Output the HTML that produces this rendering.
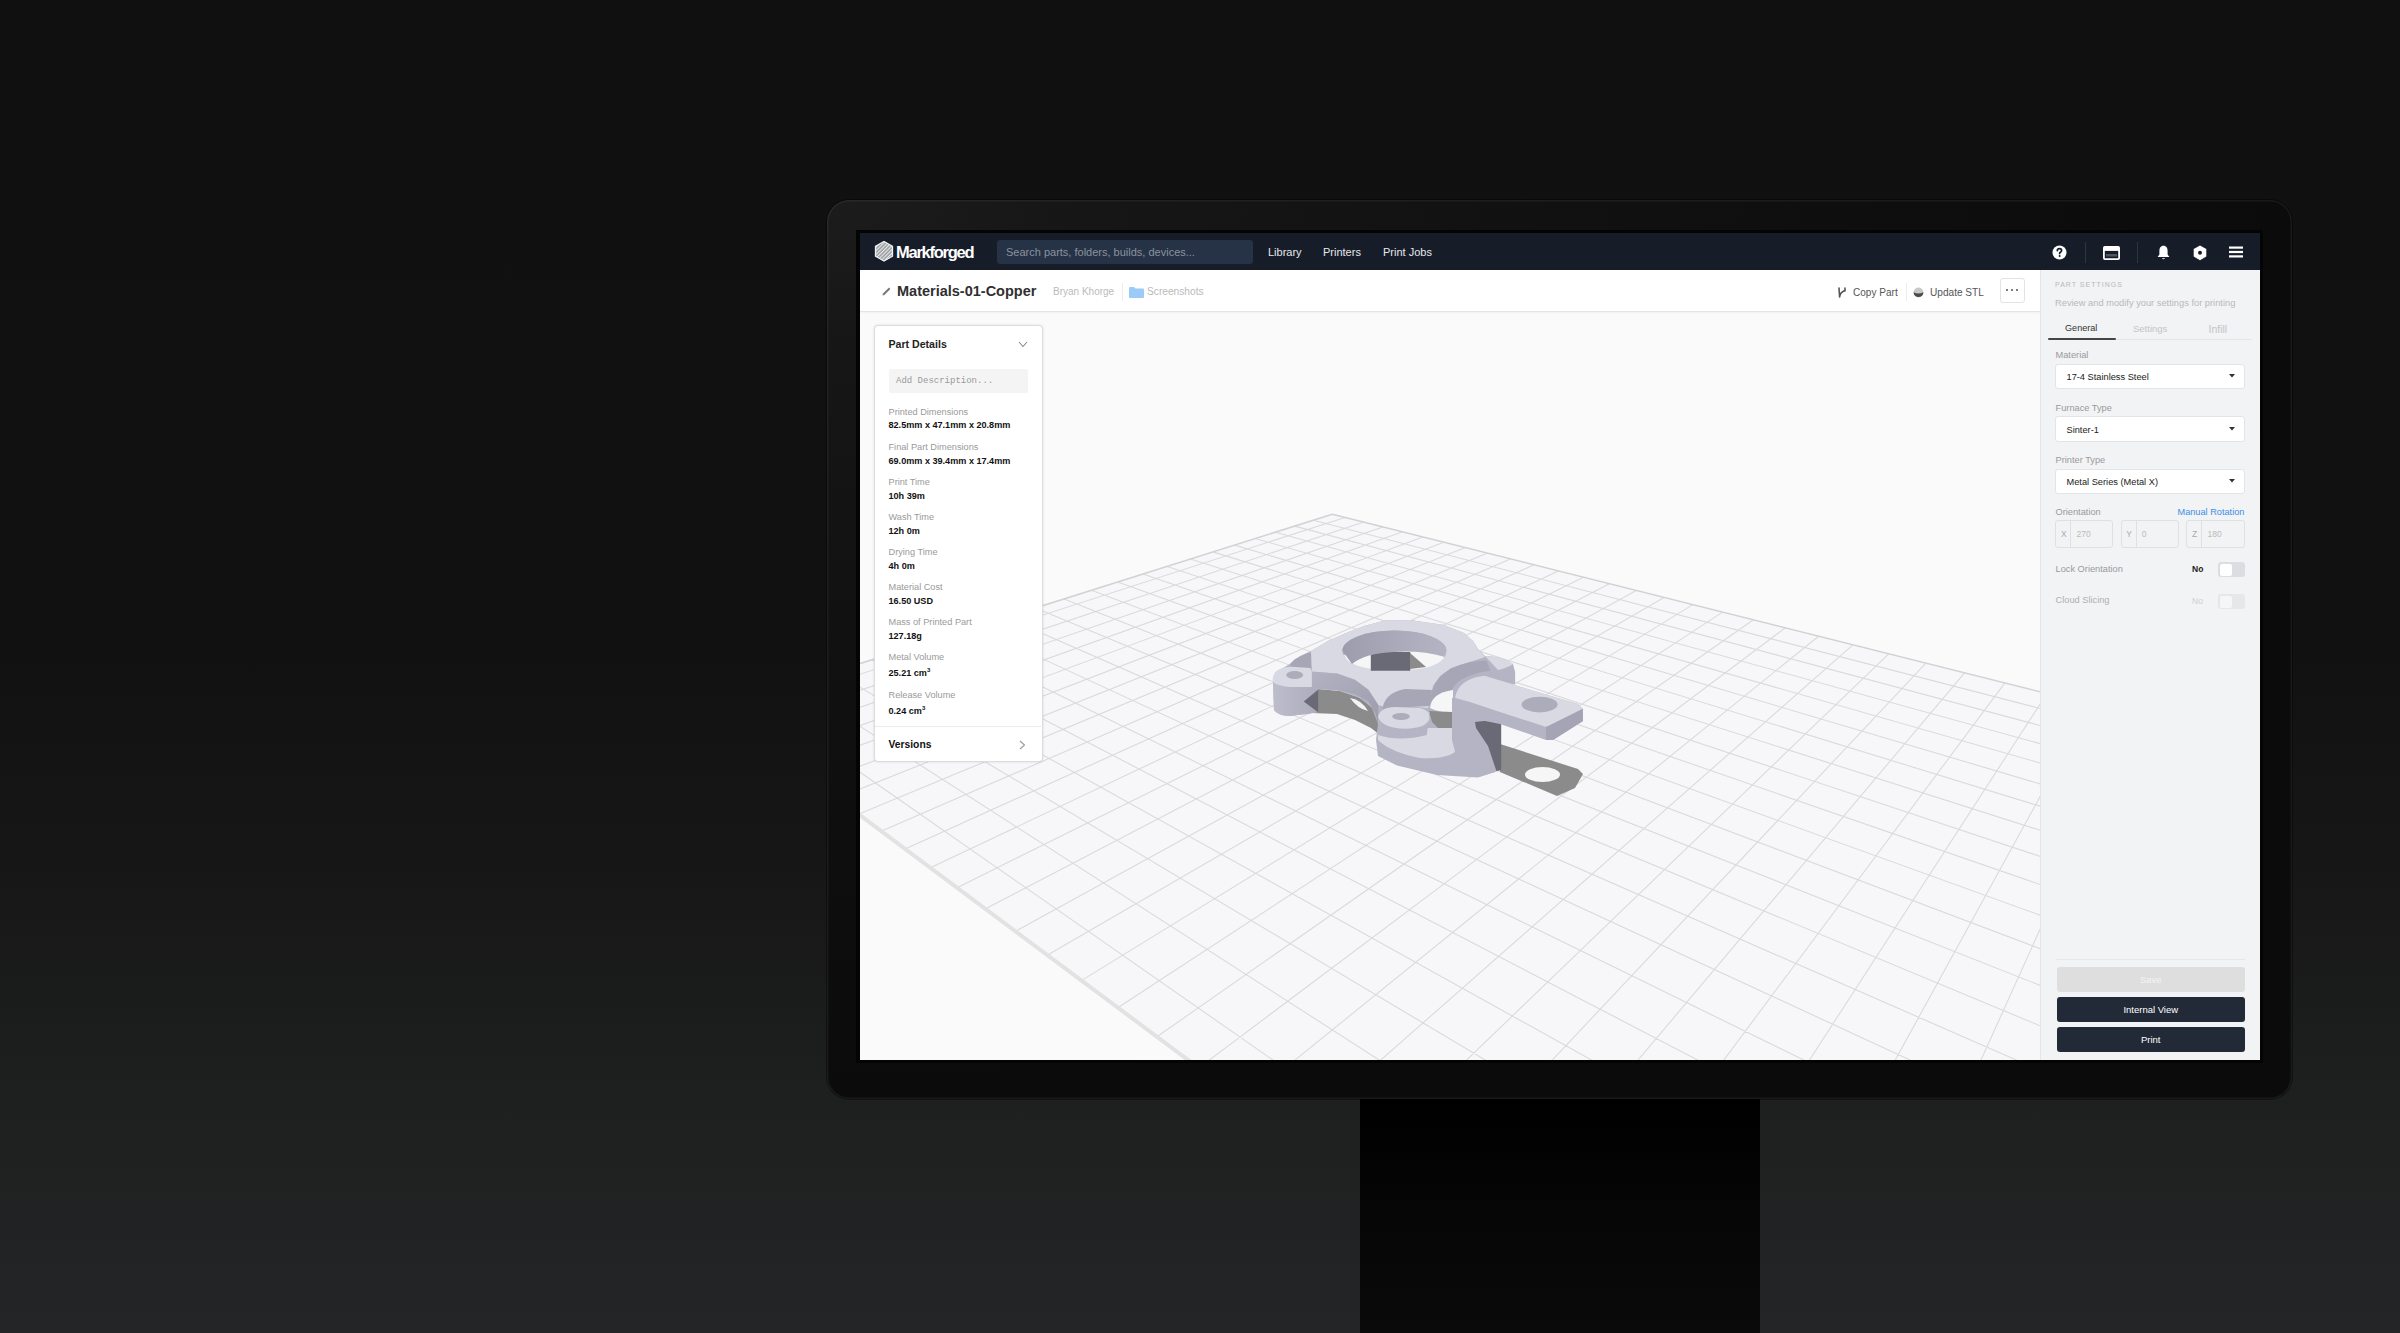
<!DOCTYPE html>
<html><head><meta charset="utf-8">
<style>
*{margin:0;padding:0;box-sizing:border-box}
html,body{width:2400px;height:1333px;overflow:hidden}
body{position:relative;font-family:"Liberation Sans",sans-serif;background:linear-gradient(to bottom,#101010 0px,#111111 640px,#161616 850px,#1e1f1f 1100px,#242526 1333px)}
.abs{position:absolute}
#bezel{left:827px;top:200px;width:1465px;height:899px;border-radius:22px;background:radial-gradient(ellipse farthest-corner at 0% 0%,#1c1c1c 0%,#161616 12%,#121212 30%,#0e0e0e 50%,#0b0b0b 72%);box-shadow:inset 0 0 0 1.5px rgba(255,255,255,0.06),0 0 0 1px rgba(0,0,0,0.4)}
#stand{left:1360px;top:1099px;width:400px;height:234px;background:linear-gradient(to bottom,#000 0%,#050505 40%,#0a0a0a 100%)}
#screen{left:859px;top:233px;width:1401px;height:827px;background:#f8f8f8;overflow:hidden;box-shadow:0 0 0 3px #040404}
#nav{left:0;top:0;width:1401px;height:37px;background:#161d29}
#hdr{left:0;top:37px;width:1181px;height:42px;background:#fff;border-bottom:1.5px solid #e4e4e4;box-shadow:0 1px 2px rgba(0,0,0,0.04)}
#rp{left:1181px;top:37px;width:220px;height:790px;background:#f2f3f5;border-left:1px solid #e4e5e7}
.t{position:absolute;white-space:nowrap;line-height:1}
.v sup{font-size:6px;vertical-align:top;position:relative;top:-2px}
</style></head><body>
<div id="bezel" class="abs"></div>
<div id="stand" class="abs"></div>
<div id="screen" class="abs">
  <div id="view" class="abs" style="left:0;top:79px;width:1181px;height:748px;background:#fafafa;overflow:hidden"><!--GRID--><svg class="abs" style="left:0;top:0" width="1181" height="748" viewBox="0 0 1181 748">
    <path d="M473.3,202.2L1640.6,495.0L1924.5,1935.8L-140.1,396.1Z" fill="#f7f7f9"/>
    <path d="M486.1,205.4L-129.2,404.3M504.8,210.1L-113.1,416.3M523.9,214.9L-96.2,428.9M543.6,219.8L-78.6,442.0M563.9,224.9L-60.1,455.8M584.8,230.2L-40.7,470.3M606.3,235.6L-20.3,485.5M628.5,241.1L1.2,501.5M651.4,246.9L23.8,518.4M675.0,252.8L47.7,536.2M699.3,258.9L72.9,555.0M724.5,265.2L99.6,574.9M750.4,271.7L127.9,596.0M777.3,278.5L157.9,618.4M805.0,285.4L189.9,642.2M833.8,292.6L224.0,667.6M863.5,300.1L260.3,694.8M894.4,307.8L299.3,723.8M926.3,315.8L341.1,755.0M959.5,324.2L386.1,788.5M993.9,332.8L434.6,824.7M1029.7,341.8L487.2,863.9M1066.9,351.1L544.2,906.5M1105.6,360.8L606.4,952.8M1145.9,370.9L674.4,1003.5M1187.9,381.5L749.0,1059.2M1231.7,392.5L831.4,1120.6M1277.5,403.9L922.8,1188.8M1325.3,415.9L1024.8,1264.8M1375.3,428.5L1139.2,1350.2M1427.7,441.6L1268.6,1446.6M1482.6,455.4L1416.1,1556.6M1540.2,469.8L1585.7,1683.1M1600.8,485.0L1782.8,1830.1M454.4,208.2L1644.9,516.7M435.7,214.1L1649.2,538.7M416.3,220.2L1653.9,562.4M396.3,226.5L1658.9,587.7M375.5,233.1L1664.2,615.1M353.9,239.9L1670.0,644.5M331.5,247.0L1676.3,676.4M308.2,254.4L1683.2,711.1M284.0,262.0L1690.6,748.9M258.8,270.0L1698.8,790.2M232.5,278.3L1707.7,835.6M205.1,287.0L1717.6,885.8M176.6,296.0L1728.6,941.5M146.7,305.4L1740.8,1003.6M115.5,315.3L1754.6,1073.4M82.8,325.6L1770.1,1152.4M48.6,336.5L1787.9,1242.5M12.7,347.8L1808.3,1346.2M-25.0,359.7L1832.1,1467.0M-64.6,372.2L1860.2,1609.2M-106.3,385.4L1893.7,1779.3" stroke="#dadadc" stroke-width="1.1" fill="none"/>
    <path d="M473.3,202.2L1640.6,495.0M473.3,202.2L-140.1,396.1" stroke="#d2d2d4" stroke-width="1.6" fill="none"/>
    <path d="M-140.1,398.1L1924.5,1937.8" stroke="#e2e2e3" stroke-width="4" fill="none"/>
  </svg><!--/GRID--><!--PART--><svg class="abs" style="left:0;top:0" width="1181" height="748" viewBox="0 0 1181 748"><defs><linearGradient id="gWall" x1="0" y1="0" x2="1" y2="0"><stop offset="0" stop-color="#9c9cac"/><stop offset="0.5" stop-color="#a9a9b9"/><stop offset="1" stop-color="#b4b4c4"/></linearGradient><linearGradient id="gSide" x1="0" y1="0" x2="1" y2="0"><stop offset="0" stop-color="#bdbdcc"/><stop offset="1" stop-color="#acacbc"/></linearGradient><linearGradient id="gBand" x1="0" y1="0" x2="1" y2="1"><stop offset="0" stop-color="#b2b2c2"/><stop offset="1" stop-color="#9c9cad"/></linearGradient><linearGradient id="gShad" x1="0" y1="0" x2="0" y2="1"><stop offset="0" stop-color="#808080"/><stop offset="1" stop-color="#959595"/></linearGradient></defs><path d="M459.0,377.0 L481.0,379.0 L499.0,385.0 L511.0,392.0 L518.0,404.0 L521.0,423.0 L512.0,416.0 L496.0,408.0 L478.0,402.0 L453.0,401.0 L459.0,388.0Z" fill="#8b8b8b"/><path d="M569.0,392.0 L592.0,388.0 L593.0,414.0 L581.0,423.0 L569.0,416.0Z" fill="#8b8b8b"/><path d="M641.0,432.0 L719.0,457.0 L724.0,462.0 L716.0,476.0 L698.0,484.0 L641.0,460.0Z" fill="#8b8b8b"/><ellipse cx="683.5" cy="462.5" rx="17.5" ry="7.5" fill="#f6f6f7"/><path d="M431.0,352.0 L441.0,344.0 L452.0,339.0 L469.0,329.0 L487.0,321.0 L505.0,314.0 L526.0,308.5 L551.0,308.0 L585.0,313.0 L605.0,321.0 L614.0,329.0 L619.0,337.0 L626.0,344.0 L632.0,345.0 L646.0,348.0 L654.0,355.0 L656.0,361.0 L656.0,372.0 L641.0,378.0 L625.0,388.0 L611.0,393.0 L601.0,400.0 L593.0,408.0 L593.0,423.0 L601.0,433.0 L617.0,438.0 L626.0,448.0 L636.0,460.0 L619.0,465.5 L578.0,463.0 L538.0,453.5 L519.0,444.0 L517.0,428.0 L519.0,412.0 L513.0,396.0 L501.0,386.0 L481.0,379.0 L459.0,377.0 L459.0,400.0 L449.0,402.0 L429.0,404.0 L415.0,398.0 L414.0,370.0 L417.0,360.0Z" fill="#b4b4c4"/><path d="M452.0,339.0 L469.0,329.0 L487.0,321.0 L505.0,314.0 L526.0,308.5 L551.0,308.0 L585.0,313.0 L605.0,321.0 L614.0,329.0 L619.0,337.0 L626.0,345.0 L611.0,350.0 L592.0,356.0 L581.0,364.0 L574.0,374.0 L571.0,388.0 L569.0,396.0 L546.0,394.0 L526.0,395.0 L519.0,393.0 L509.0,378.0 L496.0,368.0 L478.0,361.5 L453.0,359.5Z" fill="#d9d9e4"/><ellipse cx="535.4" cy="338.6" rx="52" ry="20" fill="#acacba"/><path d="M485,343 Q535,332 586,343 Q581,358.5 535,358.6 Q491,358 485,343Z" fill="#f6f6f7"/><path d="M511.8,340.0 L551.2,340.0 L551.2,358.8 L511.8,358.8Z" fill="#6a6a76"/><path d="M551.0,341.0 L567.0,355.0 L551.0,357.0Z" fill="#8b8b8b"/><path d="M483.4000000000001,338.6 A52,20 0 0 1 587.4000000000001,338.6 L586,345 Q561,338 535,340 Q506,341 493,352Z" fill="url(#gWall)"/><path d="M431.0,352.0 L436.0,347.0 L450.0,340.8 L452.0,341.7 L452.0,356.0 L433.0,356.0Z" fill="#a6a6b6"/><path d="M452.8,359.7 L478.0,361.5 L496.0,367.8 L509.5,377.7 L519.4,393.0 L519.0,412.0 L516.7,402.0 L509.5,389.4 L496.0,382.2 L478.0,377.7 L459.0,376.8 L452.8,376.0Z" fill="url(#gBand)"/><path d="M414,369.6 L415,398.4 Q421,404.5 431,404 L459,400.20000000000005 L459,377.70000000000005 L452.79999999999995,375 Z" fill="url(#gSide)"/><path d="M459.1,377.7 L459.1,400.2 L444.7,389.4Z" fill="#6a6a76"/><path d="M413.5,369.6 Q413,355 433,354.79999999999995 L451,356 L452.79999999999995,359 L452.79999999999995,375 L431,375 Q417,374 413.5,369.6Z" fill="#d9d9e4"/><ellipse cx="435.7" cy="363.0" rx="8.5" ry="4" fill="#acacba"/><path d="M523,400 Q524,381 546,377 L573,378 L571,394 L531,396Z" fill="#a6a6b6"/><path d="M571.8,394 Q569,360 611,350 L632,348 L641,358 Q601,360 592,379 L581,396Z" fill="#a6a6b6"/><path d="M571,396 Q572,381 594,378 L594,401 Q581,401 571,396Z" fill="#f6f6f7"/><path d="M491,386 Q503,388 509,399 Q499,397 491,386Z" fill="#f4f4f5"/><path d="M570.0,399.0 L593.0,400.0 L593.0,416.0 L582.0,419.0 L573.0,410.0Z" fill="#8b8b8b"/><path d="M519,423 Q541,423 566,416 L593,416 L601,433 Q596,448 561,446 Q531,440 519,428Z" fill="#d9d9e4"/><path d="M519,406 L519,423 Q541,430 567.7,423 L571,400Z" fill="#b4b4c4"/><path d="M519,405 Q521,395 536,395 L561,396 Q571,398 570.5,406 Q569,416 546,416.79999999999995 Q523,416 519,405Z" fill="#d9d9e4"/><ellipse cx="542.0" cy="404.5" rx="8.8" ry="3.4" fill="#acacba"/><path d="M593.0,386.0 L617.0,378.0 L642.0,407.0 L642.0,458.0 L636.0,460.0 L619.0,465.0 L601.0,458.0 L593.0,428.0Z" fill="#b4b4c4"/><path d="M616.0,410.0 L642.2,407.0 L642.2,458.0 L637.4,459.0 L629.0,434.0 L617.0,416.0Z" fill="#6a6a76"/><path d="M626,344 Q641,344 654,352 L656.0999999999999,360 L656.0999999999999,369 L641,372 L631,358Z" fill="#b4b4c4"/><path d="M626,344 Q641,344 654,352 Q648,356 639,358Z" fill="#d9d9e4"/><path d="M596.0,382.0 L625.0,364.0 L719.0,392.0 L724.0,397.0 L724.0,409.0 L694.0,428.0 L687.0,428.0 L641.0,412.0 L596.0,403.0Z" fill="#b4b4c4"/><path d="M596,386 Q599,367 625.4000000000001,363.79999999999995 L719,392 L723.8,396.79999999999995 L693.8,413.6 L686.5999999999999,414.79999999999995 L641,400 L611,390Z" fill="#d9d9e4"/><path d="M687.0,415.0 L723.8,396.8 L724.0,409.0 L694.0,428.0 L687.0,428.0Z" fill="#a4a4b4"/><ellipse cx="680.6" cy="392.6" rx="18" ry="7.8" fill="#acacba"/></svg><!--/PART--></div>
  <div id="lp" class="abs" style="left:15px;top:92px;width:169px;height:437px;background:#fff;border:1.5px solid #dcdcdc;border-radius:4px;box-shadow:0 0 2.5px rgba(0,0,0,0.13)">
    <div class="t" style="left:13.5px;top:12.5px;font-size:10.6px;font-weight:bold;color:#222">Part Details</div>
    <svg class="abs" style="left:143px;top:14.5px" width="10" height="7" viewBox="0 0 10 7"><path d="M1 1 L5 5.5 L9 1" stroke="#888" stroke-width="1.1" fill="none"/></svg>
    <div class="abs" style="left:13.5px;top:42.5px;width:139px;height:24.5px;background:#f4f4f4;border-radius:2px"></div>
    <div class="t" style="left:21px;top:51px;font-family:'Liberation Mono',monospace;font-size:9px;color:#999">Add Description...</div>
    <div class="t" style="left:13.5px;top:81.5px;font-size:9.2px;color:#9a9a9a">Printed Dimensions</div>
    <div class="t v" style="left:13.5px;top:95px;font-size:9.1px;font-weight:bold;color:#111">82.5mm x 47.1mm x 20.8mm</div>
    <div class="t" style="left:13.5px;top:116.5px;font-size:9.2px;color:#9a9a9a">Final Part Dimensions</div>
    <div class="t v" style="left:13.5px;top:130.5px;font-size:9.1px;font-weight:bold;color:#111">69.0mm x 39.4mm x 17.4mm</div>
    <div class="t" style="left:13.5px;top:151.5px;font-size:9.2px;color:#9a9a9a">Print Time</div>
    <div class="t v" style="left:13.5px;top:165.5px;font-size:9.1px;font-weight:bold;color:#111">10h 39m</div>
    <div class="t" style="left:13.5px;top:186.5px;font-size:9.2px;color:#9a9a9a">Wash Time</div>
    <div class="t v" style="left:13.5px;top:200.5px;font-size:9.1px;font-weight:bold;color:#111">12h 0m</div>
    <div class="t" style="left:13.5px;top:221.5px;font-size:9.2px;color:#9a9a9a">Drying Time</div>
    <div class="t v" style="left:13.5px;top:235.5px;font-size:9.1px;font-weight:bold;color:#111">4h 0m</div>
    <div class="t" style="left:13.5px;top:256.5px;font-size:9.2px;color:#9a9a9a">Material Cost</div>
    <div class="t v" style="left:13.5px;top:270.5px;font-size:9.1px;font-weight:bold;color:#111">16.50 USD</div>
    <div class="t" style="left:13.5px;top:291.5px;font-size:9.2px;color:#9a9a9a">Mass of Printed Part</div>
    <div class="t v" style="left:13.5px;top:305.5px;font-size:9.1px;font-weight:bold;color:#111">127.18g</div>
    <div class="t" style="left:13.5px;top:326.5px;font-size:9.2px;color:#9a9a9a">Metal Volume</div>
    <div class="t v" style="left:13.5px;top:343px;font-size:9.1px;font-weight:bold;color:#111">25.21 cm<sup>3</sup></div>
    <div class="t" style="left:13.5px;top:364.5px;font-size:9.2px;color:#9a9a9a">Release Volume</div>
    <div class="t v" style="left:13.5px;top:381px;font-size:9.1px;font-weight:bold;color:#111">0.24 cm<sup>3</sup></div>
    <div class="abs" style="left:0;top:399.5px;width:166px;height:1px;background:#ececec"></div>
    <div class="t" style="left:13.5px;top:413.5px;font-size:10.3px;font-weight:bold;color:#111">Versions</div>
    <svg class="abs" style="left:144px;top:413.5px" width="7" height="10" viewBox="0 0 7 10"><path d="M1 1 L5.5 5 L1 9" stroke="#999" stroke-width="1.1" fill="none"/></svg>
  </div>
  <div id="nav" class="abs">
    <svg class="abs" style="left:15px;top:8.3px" width="20" height="21" viewBox="0 0 20 21">
      <defs><pattern id="hp" width="2.6" height="2.6" patternUnits="userSpaceOnUse" patternTransform="rotate(45)"><rect width="1.5" height="2.6" fill="#e8e8e8"/><rect x="1.5" width="1.1" height="2.6" fill="#9a9ea4"/></pattern></defs>
      <polygon points="10,0.5 18.5,5.3 18.5,15.2 10,20 1.5,15.2 1.5,5.3" fill="url(#hp)" stroke="#f0f0f0" stroke-width="1.3" stroke-linejoin="round"/>
    </svg>
    <div class="t" style="left:37px;top:11px;font-size:16.5px;font-weight:bold;color:#fff;letter-spacing:-1.25px">Markforged</div>
    <div class="abs" style="left:138px;top:7px;width:256px;height:24px;border-radius:3px;background:#263246"></div>
    <div class="t" style="left:147px;top:13.5px;font-size:11px;color:#8a93a0">Search parts, folders, builds, devices...</div>
    <div class="t" style="left:409px;top:14px;font-size:11px;color:#e6e8eb">Library</div>
    <div class="t" style="left:464px;top:14px;font-size:11px;color:#e6e8eb">Printers</div>
    <div class="t" style="left:524px;top:14px;font-size:11px;color:#e6e8eb">Print Jobs</div>

    <svg class="abs" style="left:1193px;top:12px" width="15" height="15" viewBox="0 0 15 15"><circle cx="7.5" cy="7.5" r="7" fill="#fff"/><path d="M5.3 5.6 Q5.4 3.6 7.5 3.6 Q9.6 3.6 9.6 5.4 Q9.6 6.6 8.3 7.2 Q7.6 7.6 7.6 8.6" stroke="#161d29" stroke-width="1.7" fill="none" stroke-linecap="round"/><circle cx="7.6" cy="11" r="1" fill="#161d29"/></svg>
    <div class="abs" style="left:1225.5px;top:8.5px;width:1.5px;height:21px;background:#2c3542"></div>
    <svg class="abs" style="left:1243.5px;top:12.5px" width="17" height="14" viewBox="0 0 17 14"><rect x="0.9" y="0.9" width="15.2" height="12.2" rx="1" fill="none" stroke="#fff" stroke-width="1.8"/><rect x="0.9" y="0.9" width="15.2" height="4" fill="#fff"/><rect x="3" y="8" width="11" height="2.5" fill="#fff" opacity="0.25"/></svg>
    <div class="abs" style="left:1277.5px;top:8.5px;width:1.5px;height:21px;background:#2c3542"></div>
    <svg class="abs" style="left:1297.5px;top:11.5px" width="13" height="16" viewBox="0 0 13 16"><path d="M6.5 0.8 C3.6 0.8 2.4 3.3 2.4 6 L2.4 9.6 L0.6 12 L12.4 12 L10.6 9.6 L10.6 6 C10.6 3.3 9.4 0.8 6.5 0.8 Z" fill="#fff"/><path d="M4.8 13.2 Q6.5 15.4 8.2 13.2 Z" fill="#fff"/></svg>
    <svg class="abs" style="left:1333.5px;top:11.5px" width="14" height="16" viewBox="0 0 14 16"><polygon points="7,0.5 13.3,4.1 13.3,11.5 7,15.2 0.7,11.5 0.7,4.1" fill="#fff"/><circle cx="7" cy="7.8" r="2" fill="#161d29"/></svg>
    <svg class="abs" style="left:1370px;top:13px" width="14" height="12" viewBox="0 0 14 12"><rect y="0.5" width="14" height="2.2" fill="#fff"/><rect y="4.9" width="14" height="2.2" fill="#fff"/><rect y="9.3" width="14" height="2.2" fill="#fff"/></svg>
  </div>
  <div id="hdr" class="abs">
    <div class="t" style="left:38px;top:14px;font-size:14.5px;font-weight:bold;color:#303030">Materials-01-Copper</div>
    <div class="t" style="left:194px;top:17px;font-size:10px;color:#bababa">Bryan Khorge</div>
    <div class="t" style="left:288px;top:17px;font-size:10.2px;color:#bababa">Screenshots</div>
    <div class="t" style="left:994px;top:17.5px;font-size:10.05px;color:#555">Copy Part</div>
    <div class="t" style="left:1071px;top:17.5px;font-size:10.1px;color:#555">Update STL</div>

    <svg class="abs" style="left:22px;top:16px" width="11" height="11" viewBox="0 0 11 11"><path d="M1.5 9.5 L2 7.6 L8 1.6 L9.4 3 L3.4 9 Z" fill="#777"/></svg>
    <div class="abs" style="left:263px;top:13px;width:1px;height:18px;background:#ececec"></div>
    <svg class="abs" style="left:270px;top:17px" width="15" height="11" viewBox="0 0 15 11"><path d="M0 1 Q0 0 1 0 L5 0 L6.5 1.5 L14 1.5 Q15 1.5 15 2.5 L15 10 Q15 11 14 11 L1 11 Q0 11 0 10 Z" fill="#9ccbf8"/></svg>
    <svg class="abs" style="left:978px;top:17px" width="10" height="11" viewBox="0 0 10 11"><path d="M2 1 L2.6 10 M2.6 10 Q3 5.5 8 3.2 M8 1 L8 4" stroke="#555" stroke-width="1.6" fill="none" stroke-linecap="round"/></svg>
    <div class="abs" style="left:1047px;top:13px;width:1px;height:18px;background:#ececec"></div>
    <svg class="abs" style="left:1054px;top:16.5px" width="11" height="11" viewBox="0 0 11 11"><circle cx="5.5" cy="5.5" r="4.9" fill="#c8c8c8"/><path d="M0.6 5.2 Q5.5 8 10.4 5.2 A4.9 4.9 0 0 1 0.6 5.2 Z" fill="#4a4a4a"/></svg>
    <div class="abs" style="left:1140.5px;top:7.5px;width:25px;height:25px;border:1px solid #e3e3e3;border-radius:3px;background:#fff"></div>
    <div class="abs" style="left:1146.5px;top:19px;width:2.2px;height:2.2px;border-radius:50%;background:#555;box-shadow:5px 0 0 #555,10px 0 0 #555"></div>
  </div>
  <div id="rp" class="abs">
    <div class="t" style="left:14px;top:11px;font-size:7px;color:#b8b8b8;letter-spacing:1px">PART SETTINGS</div>
    <div class="t" style="left:14px;top:29px;font-size:9.3px;color:#b9b9b9">Review and modify your settings for printing</div>

    <div class="t" style="left:24px;top:53.5px;font-size:9.1px;color:#333">General</div>
    <div class="t" style="left:92px;top:53.5px;font-size:9.5px;color:#c4c4c4">Settings</div>
    <div class="t" style="left:167.5px;top:53.5px;font-size:10.5px;color:#c4c4c4">Infill</div>
    <div class="abs" style="left:8px;top:68.5px;width:203px;height:1px;background:#e4e5e7"></div>
    <div class="abs" style="left:7px;top:67.5px;width:68px;height:2.5px;background:#454545;border-radius:1px"></div>
    <div class="t" style="left:14.5px;top:81px;font-size:9.25px;color:#9a9a9a">Material</div>
    <div class="abs" style="left:13.5px;top:93.5px;width:190.5px;height:25.5px;background:#fff;border:1px solid #e3e4e6;border-radius:3px"></div>
    <div class="t" style="left:25.5px;top:103.0px;font-size:9.25px;color:#222">17-4 Stainless Steel</div>
    <svg class="abs" style="left:187.5px;top:104.0px" width="6" height="4" viewBox="0 0 6 4"><path d="M0 0 L6 0 L3 3.5 Z" fill="#333"/></svg>

    <div class="t" style="left:14.5px;top:133.5px;font-size:9.25px;color:#9a9a9a">Furnace Type</div>
    <div class="abs" style="left:13.5px;top:146px;width:190.5px;height:25.5px;background:#fff;border:1px solid #e3e4e6;border-radius:3px"></div>
    <div class="t" style="left:25.5px;top:155.5px;font-size:9.25px;color:#222">Sinter-1</div>
    <svg class="abs" style="left:187.5px;top:156.5px" width="6" height="4" viewBox="0 0 6 4"><path d="M0 0 L6 0 L3 3.5 Z" fill="#333"/></svg>

    <div class="t" style="left:14.5px;top:186px;font-size:9.25px;color:#9a9a9a">Printer Type</div>
    <div class="abs" style="left:13.5px;top:198.5px;width:190.5px;height:25.5px;background:#fff;border:1px solid #e3e4e6;border-radius:3px"></div>
    <div class="t" style="left:25.5px;top:208.0px;font-size:9.25px;color:#222">Metal Series (Metal X)</div>
    <svg class="abs" style="left:187.5px;top:209.0px" width="6" height="4" viewBox="0 0 6 4"><path d="M0 0 L6 0 L3 3.5 Z" fill="#333"/></svg>

    <div class="t" style="left:14.5px;top:238px;font-size:9.25px;color:#9a9a9a">Orientation</div>
    <div class="t" style="left:136.5px;top:238px;font-size:9.2px;color:#3d8ee6">Manual Rotation</div>
    <div class="abs" style="left:13.5px;top:250px;width:58.5px;height:28px;border:1px solid #dfe0e2;border-radius:3px"></div>
    <div class="abs" style="left:28.5px;top:250px;width:1px;height:28px;background:#dfe0e2"></div>
    <div class="t" style="left:20.0px;top:260px;font-size:8.5px;color:#aaa">X</div>
    <div class="t" style="left:35.5px;top:260px;font-size:8.5px;color:#bbb">270</div>
    <div class="abs" style="left:79.5px;top:250px;width:58.5px;height:28px;border:1px solid #dfe0e2;border-radius:3px"></div>
    <div class="abs" style="left:94.5px;top:250px;width:1px;height:28px;background:#dfe0e2"></div>
    <div class="t" style="left:85.3px;top:260px;font-size:8.5px;color:#aaa">Y</div>
    <div class="t" style="left:100.8px;top:260px;font-size:8.5px;color:#bbb">0</div>
    <div class="abs" style="left:145px;top:250px;width:58.5px;height:28px;border:1px solid #dfe0e2;border-radius:3px"></div>
    <div class="abs" style="left:160px;top:250px;width:1px;height:28px;background:#dfe0e2"></div>
    <div class="t" style="left:151.0px;top:260px;font-size:8.5px;color:#aaa">Z</div>
    <div class="t" style="left:166.5px;top:260px;font-size:8.5px;color:#bbb">180</div>

    <div class="t" style="left:14.5px;top:294.5px;font-size:9.25px;color:#9a9a9a">Lock Orientation</div>
    <div class="t" style="left:151px;top:294.5px;font-size:8.5px;font-weight:bold;color:#222">No</div>
    <div class="abs" style="left:177px;top:292px;width:27px;height:15px;border-radius:3px;background:#dcdde0"></div>
    <div class="abs" style="left:178.5px;top:293.5px;width:12px;height:12px;border-radius:2px;background:#fff"></div>
    <div class="t" style="left:14.5px;top:326px;font-size:9.25px;color:#b0b0b0">Cloud Slicing</div>
    <div class="t" style="left:151px;top:326.5px;font-size:8.5px;color:#cfcfcf">No</div>
    <div class="abs" style="left:177px;top:324px;width:27px;height:15px;border-radius:3px;background:#e6e7e9"></div>
    <div class="abs" style="left:178.5px;top:325.5px;width:12px;height:12px;border-radius:2px;background:#f6f6f7"></div>
    <div class="abs" style="left:15px;top:689px;width:189px;height:1px;background:#e6e7e9"></div>
    <div class="abs" style="left:15.5px;top:696.5px;width:188.5px;height:25px;border-radius:3px;background:#dedede"></div>
    <div class="t" style="left:15.5px;top:705px;width:188.5px;text-align:center;font-size:9.5px;color:#f4f4f4">Save</div>
    <div class="abs" style="left:15.5px;top:726.5px;width:188.5px;height:25px;border-radius:3px;background:#222a37"></div>
    <div class="t" style="left:15.5px;top:735px;width:188.5px;text-align:center;font-size:9.5px;color:#fff">Internal View</div>
    <div class="abs" style="left:15.5px;top:756.5px;width:188.5px;height:25px;border-radius:3px;background:#222a37"></div>
    <div class="t" style="left:15.5px;top:765px;width:188.5px;text-align:center;font-size:9.5px;color:#fff">Print</div>
  </div>
  <div class="abs" style="left:0;top:0;width:1px;height:827px;background:#050505"></div>
</div>
</body></html>
